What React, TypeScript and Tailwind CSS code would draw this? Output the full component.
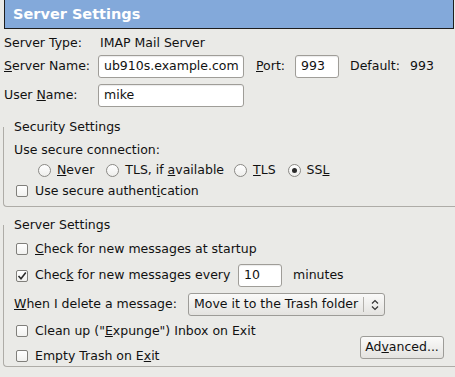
import React from 'react';

interface CheckProps {
  checked?: boolean;
  children: React.ReactNode;
}

function CheckBox({ checked = false }: { checked?: boolean }) {
  return (
    <span className="w-[12px] h-[12px] shrink-0 rounded-[2px] border border-[#807f7b] bg-gradient-to-b from-[#ffffff] to-[#f1f1ef] flex items-center justify-center">
      {checked && (
        <svg width="10" height="10" viewBox="0 0 10 10">
          <path d="M1.5 5 L4 7.8 L8.8 1.6" fill="none" stroke="#2c2c2c" strokeWidth="1.6" />
        </svg>
      )}
    </span>
  );
}

function Check({ checked, children }: CheckProps) {
  return (
    <div className="flex items-center h-[16px] pl-[2px]">
      <CheckBox checked={checked} />
      <span className="ml-[7px] whitespace-nowrap">{children}</span>
    </div>
  );
}

function Radio({ checked = false, children, className = "" }: CheckProps & { className?: string }) {
  return (
    <div className={`flex items-center ${className}`}>
      <span className="w-[13px] h-[13px] shrink-0 rounded-full border border-[#8a8985] bg-gradient-to-b from-[#ffffff] to-[#eeeeec] flex items-center justify-center">
        {checked && <span className="w-[5px] h-[5px] rounded-full bg-[#2a2a2a]" />}
      </span>
      <span className="ml-[6px] whitespace-nowrap">{children}</span>
    </div>
  );
}

function TextBox({ value, className = "" }: { value: string; className?: string }) {
  return (
    <div className={`h-[23px] bg-white border border-[#9f9d98] rounded-[3px] shadow-[inset_0_1px_1px_rgba(0,0,0,0.08)] flex items-center pl-[5px] overflow-hidden whitespace-nowrap ${className}`}>
      {value}
    </div>
  );
}

function Frame({ label, children, className = "" }: { label: string; children: React.ReactNode; className?: string }) {
  return (
    <div className={`ml-[3px] w-[470px] flex flex-col border-l border-b border-[#aeaca7] rounded-bl-[4px] pl-[10px] ${className}`}>
      <div className="-mt-[8px] h-[16px] flex items-center">{label}</div>
      {children}
    </div>
  );
}

export default function App() {
  return (
    <div className="w-[455px] h-[377px] overflow-hidden bg-[#eaeae7] text-[12.5px] text-[#111] font-['DejaVu_Sans',sans-serif] leading-none">
      <div className="ml-[4px] w-[450px] h-[29px] bg-[#83a9da] border-l border-r border-b border-[#1e1e1e] flex items-center pl-[8px]">
        <span className="text-white font-bold text-[14.5px]">Server Settings</span>
      </div>

      <div className="pl-[4px]">
        <div className="mt-[5px] h-[18px] flex items-center">
          <span className="w-[96px]">Server Type:</span>
          <span>IMAP Mail Server</span>
        </div>
        <div className="mt-[3px] h-[23px] flex items-center">
          <span className="w-[94px]"><u>S</u>erver Name:</span>
          <TextBox value="ub910s.example.com" className="w-[146px]" />
          <span className="ml-[12px] w-[39px]"><u>P</u>ort:</span>
          <TextBox value="993" className="w-[44px]" />
          <span className="ml-[11px] w-[60px]">Default:</span>
          <span>993</span>
        </div>
        <div className="mt-[6px] h-[23px] flex items-center">
          <span className="w-[94px]">User <u>N</u>ame:</span>
          <TextBox value="mike" className="w-[146px]" />
        </div>
      </div>

      <Frame label="Security Settings" className="mt-[20px] pb-[7px]">
        <div className="mt-[7px] h-[16px] flex items-center">Use secure connection:</div>
        <div className="mt-[4px] h-[16px] flex items-center pl-[24px]">
          <Radio><u>N</u>ever</Radio>
          <Radio className="ml-[12px]">TLS, if <u>a</u>vailable</Radio>
          <Radio className="ml-[10px]"><u>T</u>LS</Radio>
          <Radio checked className="ml-[12px]">SS<u>L</u></Radio>
        </div>
        <div className="mt-[5px]">
          <Check>Use secure authent<u>i</u>cation</Check>
        </div>
      </Frame>

      <Frame label="Server Settings" className="mt-[18px] pb-[2px]">
        <div className="mt-[8px]">
          <Check><u>C</u>heck for new messages at startup</Check>
        </div>
        <div className="mt-[7px] h-[23px] flex items-center pl-[2px]">
          <CheckBox checked />
          <span className="ml-[7px] w-[203px] whitespace-nowrap">Chec<u>k</u> for new messages every</span>
          <TextBox value="10" className="w-[44px]" />
          <span className="ml-[11px]">minutes</span>
        </div>
        <div className="mt-[6px] h-[23px] flex items-center">
          <span className="w-[174px] whitespace-nowrap"><u>W</u>hen I delete a message:</span>
          <div className="w-[197px] h-[23px] rounded-[3px] border border-[#9d9c98] bg-gradient-to-b from-[#fafaf9] to-[#e4e3e0] flex items-center pl-[5px]">
            <span className="w-[169px] whitespace-nowrap">Move it to the Trash folder</span>
            <span className="w-px h-[15px] bg-[#b3b1ac]" />
            <svg className="ml-[7px]" width="8" height="12" viewBox="0 0 8 12">
              <path d="M1 4.5 L4 1.5 L7 4.5 M1 7.5 L4 10.5 L7 7.5" fill="none" stroke="#333" strokeWidth="1.2" />
            </svg>
          </div>
        </div>
        <div className="mt-[7px] flex">
          <div className="w-[346px] shrink-0 flex flex-col">
            <Check>Clean up ("<u>E</u>xpunge") Inbox on Exit</Check>
            <div className="mt-[9px]">
              <Check>Empty Trash on E<u>x</u>it</Check>
            </div>
          </div>
          <div className="self-end mb-[5px] w-[84px] h-[23px] rounded-[3px] border border-[#9d9c98] bg-gradient-to-b from-[#fafaf9] to-[#e4e3e0] flex items-center justify-center">
            Ad<u>v</u>anced...
          </div>
        </div>
      </Frame>
    </div>
  );
}
